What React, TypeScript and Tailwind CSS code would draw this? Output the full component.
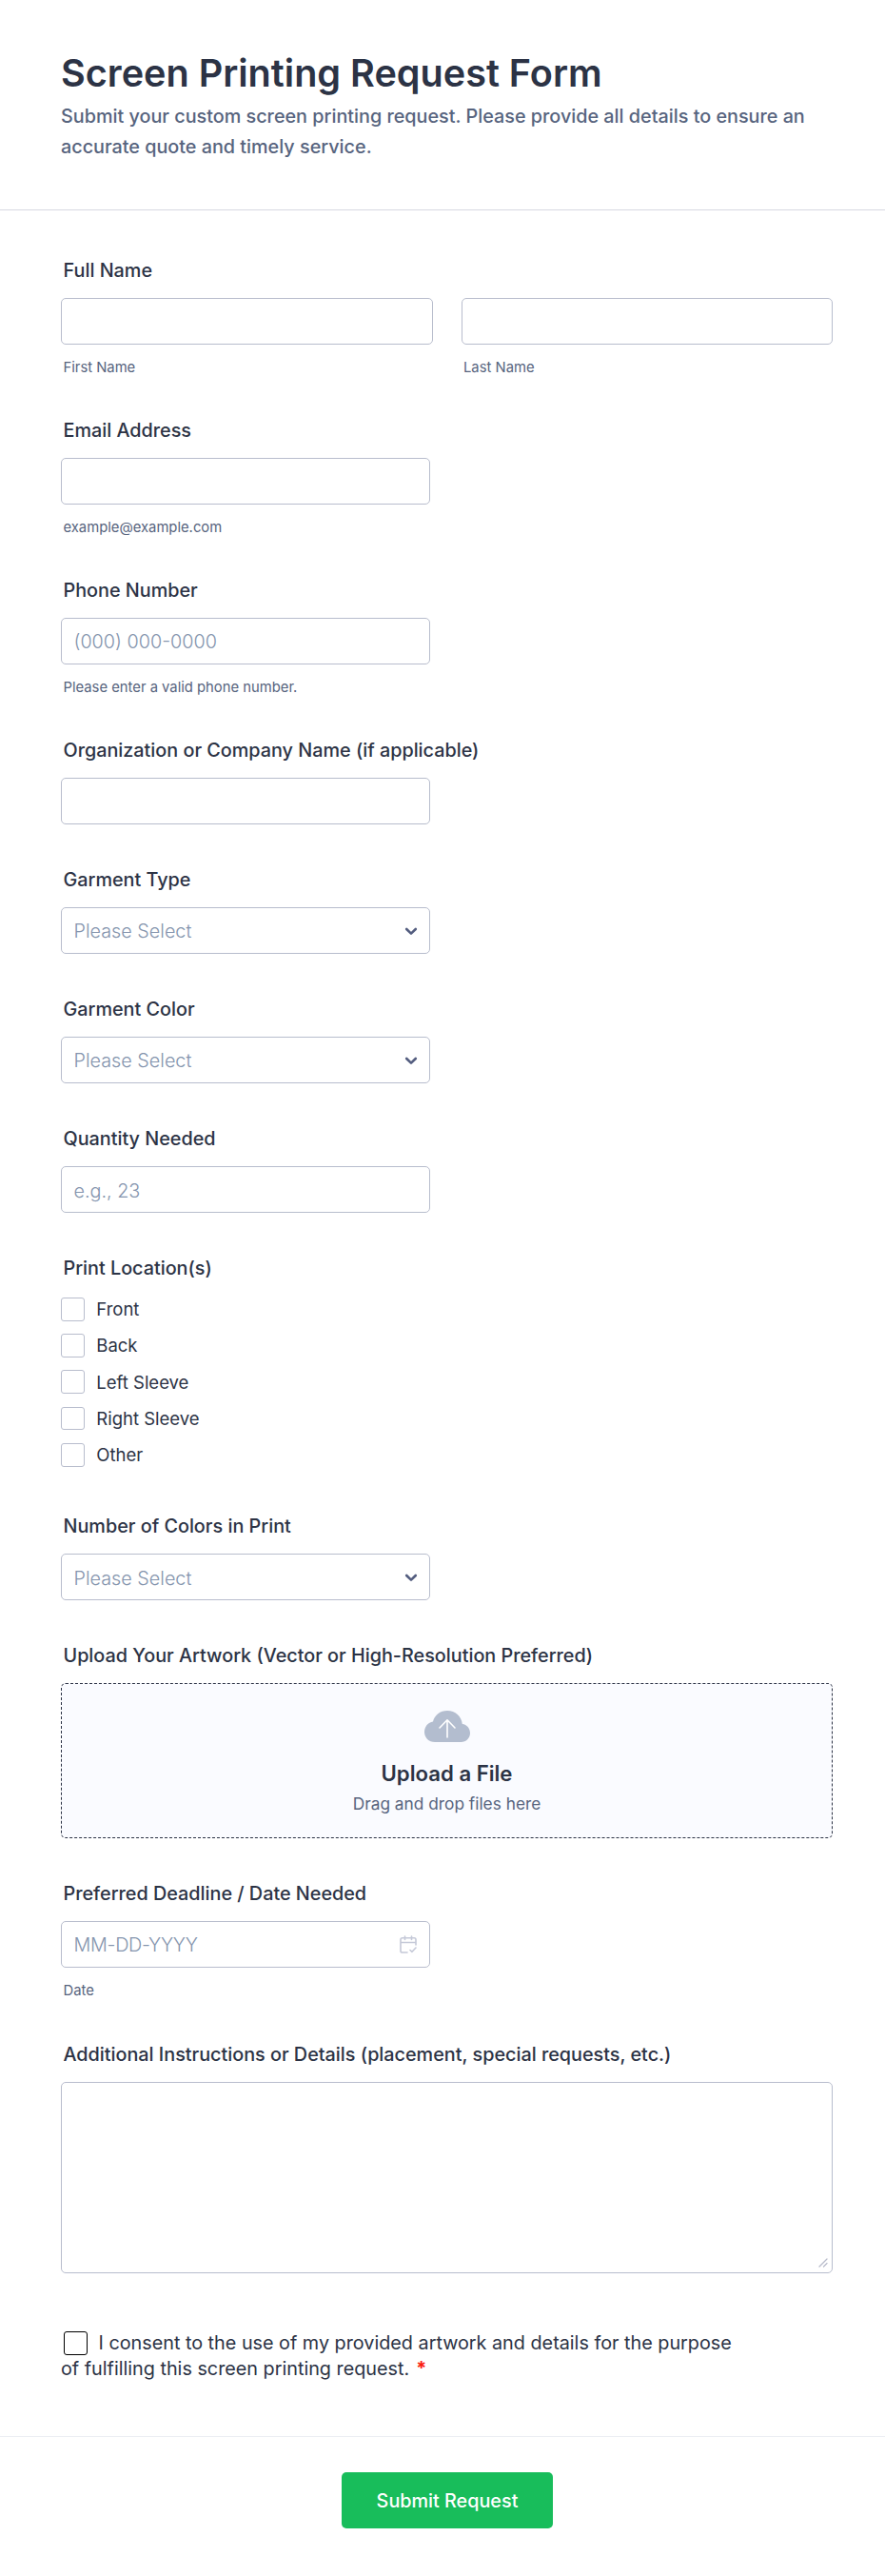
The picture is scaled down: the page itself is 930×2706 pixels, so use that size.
import type { ReactNode } from "react";

const inputClass =
  "block h-[49px] w-full rounded-[5px] border border-[#b8bdcd] bg-white px-[12.5px] text-[19.8px] font-light text-[#2c3345] outline-none placeholder:text-[#8494ad]";

function Field({ label, hint, wide, children }: { label: string; hint?: string; wide?: boolean; children: ReactNode }) {
  return (
    <div className="flex flex-col">
      <div className="mb-[17px] pl-[2.5px] text-[19.8px] leading-[24px] font-medium">{label}</div>
      <div className={wide ? "w-full" : "w-[387.5px]"}>{children}</div>
      {hint && <Hint>{hint}</Hint>}
    </div>
  );
}

function Hint({ children }: { children: ReactNode }) {
  return <div className="mt-[15.600px] pl-[2.5px] text-[14.8px] leading-[16.500px] text-[#57647e]">{children}</div>;
}

function Select() {
  return (
    <div className="flex h-[49px] items-center justify-between rounded-[5px] border border-[#b8bdcd] pr-[11.5px] pl-[12.5px] text-[19.8px] font-light text-[#8494ad]">
      <span className="pt-[3px]">Please Select</span>
      <svg width="14" height="9" viewBox="0 0 14 9" fill="none" className="mt-[2px] block">
        <path d="M2.200 2l4.800 4.600L11.800 2" stroke="#535d7f" strokeWidth="2.600" strokeLinecap="round" strokeLinejoin="round" />
      </svg>
    </div>
  );
}

const locations = ["Front", "Back", "Left Sleeve", "Right Sleeve", "Other"];

export default function App() {
  return (
    <form className="min-h-[2706px] w-full bg-white font-['Inter',sans-serif] text-[#2c3345]">
      <header className="h-[221px] border-b border-[#d7d8e1] px-[64px] pt-[53px]">
        <h1 className="text-[39.6px] leading-[49px] font-semibold">Screen Printing Request Form</h1>
        <p className="mt-[4px] text-[19.8px] leading-[32px] font-medium text-[#57647e]">
          Submit your custom screen printing request. Please provide all details to ensure an
          <br />
          accurate quote and timely service.
        </p>
      </header>

      <main className="flex h-[2338px] flex-col gap-[46px] pt-[51px] pr-[55px] pl-[64px]">
        <Field label="Full Name" wide>
          <div className="grid grid-cols-2 gap-[30px]">
            <div>
              <input className={inputClass} />
              <Hint>First Name</Hint>
            </div>
            <div>
              <input className={inputClass} />
              <Hint>Last Name</Hint>
            </div>
          </div>
        </Field>
        <Field label="Email Address" hint="example@example.com">
          <input className={inputClass} />
        </Field>
        <Field label="Phone Number" hint="Please enter a valid phone number.">
          <input className={inputClass} placeholder="(000) 000-0000" />
        </Field>
        <Field label="Organization or Company Name (if applicable)">
          <input className={inputClass} />
        </Field>
        <Field label="Garment Type">
          <Select />
        </Field>
        <Field label="Garment Color">
          <Select />
        </Field>
        <Field label="Quantity Needed">
          <input className={`${inputClass} pt-[3px]`} placeholder="e.g., 23" />
        </Field>
        <Field label="Print Location(s)">
          <div className="flex flex-col gap-[13.5px] pt-[1.5px] pb-[4.700px]">
            {locations.map((name) => (
              <div key={name} className="flex h-[24.8px] items-center gap-[12.5px]">
                <span className="size-[24.8px] rounded-[3px] border border-[#b8bdcd]" />
                <span className="text-[18.5px] leading-[24px]">{name}</span>
              </div>
            ))}
          </div>
        </Field>
        <Field label="Number of Colors in Print">
          <Select />
        </Field>
        <Field label="Upload Your Artwork (Vector or High-Resolution Preferred)" wide>
          <div className="flex h-[163px] flex-col items-center rounded-[5px] border border-dashed border-[#2c3345] bg-[#fafbff] pt-[28px]">
            <svg width="48" height="33" viewBox="0 0 48 33" fill="none" className="block">
              <path
                d="M11 33C4.500 33 0 28.300 0 22.500C0 16.700 4 12.300 9 11.500C10.500 4.800 16.500 0 24 0C32.500 0 39 6 39.800 14C44.500 14.500 48 18.500 48 23.500C48 28.800 43.800 33 38.500 33Z"
                fill="#b3bdcf"
              />
              <path d="M24 28V10M16 18l8-8.200 8 8.200" stroke="#fff" strokeWidth="1.6" strokeLinecap="round" strokeLinejoin="round" />
            </svg>
            <div className="mt-[19px] text-[22.200px] leading-[28px] font-semibold">Upload a File</div>
            <div className="mt-[7px] text-[17.300px] leading-[22px] text-[#57647e]">Drag and drop files here</div>
          </div>
        </Field>
        <Field label="Preferred Deadline / Date Needed" hint="Date">
          <div className="flex h-[49px] items-center justify-between rounded-[5px] border border-[#b8bdcd] pr-[13px] pl-[12.5px] text-[19.8px] font-light text-[#8494ad]">
            <span className="pt-[2px] tracking-[-0.3px]">MM-DD-YYYY</span>
            <svg width="18" height="19" viewBox="0 0 18 19" fill="none" stroke="#c5c9d8" strokeWidth="1.6" strokeLinecap="round" strokeLinejoin="round" className="block">
              <path d="M8 18H2.800Q1 18 1 16.200V4.500Q1 2.800 2.800 2.800H15.200Q17 2.800 17 4.500V10M1 7.500H17M5.500 1V4.500M12.500 1V4.500M11 15.500L13 17.300L17 13" />
            </svg>
          </div>
        </Field>
        <Field label="Additional Instructions or Details (placement, special requests, etc.)" wide>
          <div className="relative">
            <textarea className="block h-[201px] w-full resize-none rounded-[5px] border border-[#b8bdcd] outline-none" />
            <svg width="10" height="10" viewBox="0 0 10 10" className="absolute right-[5px] bottom-[6px]">
              <path d="M1 9L9 1M5.500 9L9 5.500" stroke="#b9bccb" strokeWidth="1.300" strokeLinecap="round" />
            </svg>
          </div>
        </Field>
        <div className="pt-[14px] text-[19.800px] leading-[27px]">
          <div className="flex h-[27px] items-center">
            <span className="mr-[12px] ml-[2.500px] size-[25px] rounded-[3px] border-[1.500px] border-black" />
            <span>I consent to the use of my provided artwork and details for the purpose</span>
          </div>
          <div>
            of fulfilling this screen printing request. <span className="ml-[1.500px] font-bold text-[#fb1d0e]">*</span>
          </div>
        </div>
      </main>

      <footer className="flex justify-center border-t border-[#ebedf3] pt-[37px] pl-[10px]">
        <button type="button" className="h-[59px] w-[222px] rounded-[5px] bg-[#18bd5b] pt-[2px] text-[19.800px] font-medium text-white">
          Submit Request
        </button>
      </footer>
    </form>
  );
}
